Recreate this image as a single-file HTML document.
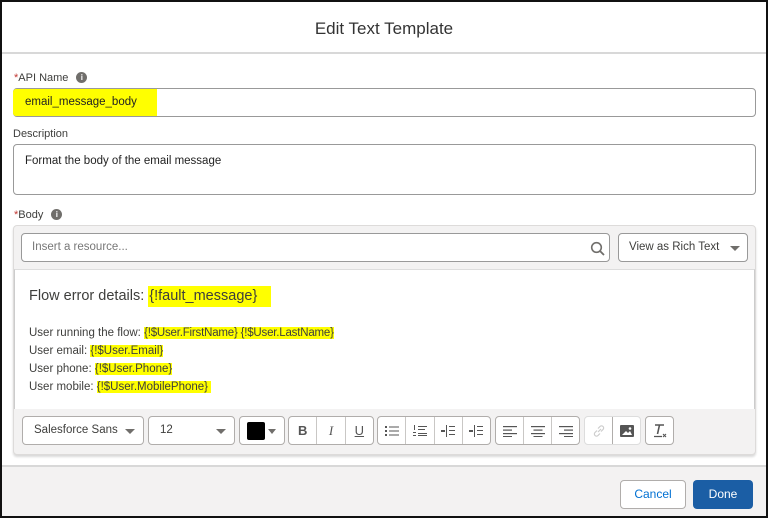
<!DOCTYPE html><html><head><style>
*{box-sizing:border-box;margin:0;padding:0}
body{width:768px;height:518px;background:#fff;font-family:"Liberation Sans",sans-serif;color:#3e3e3c;position:relative;overflow:hidden}
.frame{position:absolute;left:0;top:0;width:768px;height:518px;border:2px solid #111;}
.a{position:absolute}
.lbl{font-size:11px;color:#3e3e3c}
.req{color:#c23934}
.info{display:inline-block;width:11px;height:11px;border-radius:50%;background:#706e6b;color:#fff;font-size:8px;text-align:center;line-height:11px;font-weight:bold;vertical-align:1px;margin-left:8px}
.inp{border:1px solid #999;border-radius:4px;background:#fff}
.hl{background:#ffff00}
.btn{position:absolute;top:416px;height:29px;border:1px solid #b0adab;border-radius:4px;background:#fff;display:flex;overflow:hidden}
.sb{flex:1;height:27px;border-right:1px solid #c9c7c5;display:flex;align-items:center;justify-content:center;font-size:13px;color:#555}
.sb:last-child{border-right:none}
.ed{font-size:11.5px;line-height:18px;color:#3e3e3c}
</style></head><body>
<div class="a" style="left:0;top:0;width:768px;height:54px;background:#fff;border-bottom:2px solid #d8d8d8"></div>
<div class="a" style="left:0;top:19px;width:768px;text-align:center;font-size:17px;color:#333">Edit Text Template</div>

<div class="a lbl" style="left:14px;top:72px"><span class="req">*</span>API Name<span class="info">i</span></div>
<div class="a inp" style="left:13px;top:88px;width:743px;height:29px"></div>
<div class="a hl" style="left:13px;top:89px;width:144px;height:27px;border-radius:3px 0 0 3px"></div>
<div class="a" style="left:25px;top:96px;font-size:11.5px;color:#222">email_message_body</div>

<div class="a lbl" style="left:13px;top:128px">Description</div>
<div class="a inp" style="left:13px;top:144px;width:743px;height:51px"></div>
<div class="a" style="left:25px;top:155px;font-size:11.5px;color:#222">Format the body of the email message</div>

<div class="a lbl" style="left:14px;top:209px"><span class="req">*</span>Body<span class="info">i</span></div>
<div class="a" style="left:13px;top:225px;width:743px;height:230px;background:#f3f2f2;border:1px solid #dddbda;border-radius:4px;box-shadow:0 2px 2px rgba(0,0,0,.15)"></div>
<div class="a inp" style="left:21px;top:233px;width:589px;height:29px"></div>
<div class="a" style="left:32px;top:241px;font-size:11.5px;color:#777">Insert a resource...</div>
<svg class="a" style="left:590px;top:241px" width="16" height="16" viewBox="0 0 16 16"><circle cx="6.5" cy="6.5" r="4.8" fill="none" stroke="#706e6b" stroke-width="1.6"/><path d="M10 10l4 4" stroke="#706e6b" stroke-width="1.8"/></svg>
<div class="a inp" style="left:618px;top:233px;width:130px;height:29px"></div>
<div class="a" style="left:629px;top:241px;font-size:11.5px;color:#3e3e3c">View as Rich Text</div>
<div class="a" style="left:730px;top:246px;width:0;height:0;border-left:5px solid transparent;border-right:5px solid transparent;border-top:5px solid #706e6b"></div>

<div class="a" style="left:14px;top:269px;width:741px;height:140px;background:#fff;border-left:1px solid #ccc;border-right:1px solid #ccc;border-top:1px solid #ddd"></div>
<div class="a" style="left:29px;top:288px;font-size:14.5px;color:#3e3e3c">Flow error details: <span class="hl" style="padding:2px 14px 3px 1px">{!fault_message}</span></div>
<div class="a ed" style="left:29px;top:324px">User running the flow: <span class="hl" style="letter-spacing:-0.2px">{!$User.FirstName} {!$User.LastName}</span><br>User email: <span class="hl">{!$User.Email}</span><br>User phone: <span class="hl">{!$User.Phone}</span><br>User mobile: <span class="hl">{!$User.MobilePhone}&nbsp;</span></div>

<div class="btn" style="left:22px;width:122px"><span style="position:absolute;left:11px;top:7px;font-size:11.5px">Salesforce Sans</span><span style="position:absolute;right:8px;top:12px;border-left:5px solid transparent;border-right:5px solid transparent;border-top:5px solid #706e6b"></span></div>
<div class="btn" style="left:148px;width:87px"><span style="position:absolute;left:11px;top:7px;font-size:11.5px">12</span><span style="position:absolute;right:8px;top:12px;border-left:5px solid transparent;border-right:5px solid transparent;border-top:5px solid #706e6b"></span></div>
<div class="btn" style="left:239px;width:46px"><span style="position:absolute;left:7px;top:5px;width:18px;height:18px;background:#000;border-radius:2px"></span><span style="position:absolute;right:8px;top:12px;border-left:4px solid transparent;border-right:4px solid transparent;border-top:5px solid #706e6b"></span></div>
<div class="btn" style="left:288px;width:86px"><span class="sb" style="font-weight:bold">B</span><span class="sb" style="font-style:italic;font-family:'Liberation Serif',serif">I</span><span class="sb" style="text-decoration:underline">U</span></div>
<div class="btn" style="left:377px;width:114px">
<span class="sb"><svg width="14" height="12"><g fill="#555"><rect x="0" y="1" width="2" height="2"/><rect x="0" y="5" width="2" height="2"/><rect x="0" y="9" width="2" height="2"/><rect x="4" y="1.5" width="10" height="1"/><rect x="4" y="5.5" width="10" height="1"/><rect x="4" y="9.5" width="10" height="1"/></g></svg></span>
<span class="sb"><svg width="14" height="12"><g fill="#555"><rect x="1" y="0" width="1" height="5"/><rect x="0" y="7" width="3" height="1"/><rect x="0" y="10" width="3" height="1"/><rect x="5" y="1" width="9" height="1"/><rect x="5" y="4" width="7" height="1"/><rect x="5" y="8" width="9" height="1"/><rect x="5" y="10" width="9" height="1"/></g></svg></span>
<span class="sb"><svg width="14" height="12"><g fill="#555"><rect x="0" y="5" width="4" height="2"/><rect x="5" y="0" width="1" height="12"/><rect x="8" y="1" width="6" height="1"/><rect x="8" y="5" width="6" height="1"/><rect x="8" y="9" width="6" height="1"/></g></svg></span>
<span class="sb"><svg width="14" height="12"><g fill="#555"><rect x="0" y="5" width="4" height="2"/><rect x="5" y="0" width="1" height="12"/><rect x="8" y="1" width="6" height="1"/><rect x="8" y="5" width="6" height="1"/><rect x="8" y="9" width="6" height="1"/></g></svg></span></div>
<div class="btn" style="left:495px;width:85px">
<span class="sb"><svg width="14" height="12"><g fill="#555"><rect x="0" y="1" width="14" height="1.2"/><rect x="0" y="4.5" width="9" height="1.2"/><rect x="0" y="8" width="14" height="1.2"/><rect x="0" y="11" width="9" height="1"/></g></svg></span>
<span class="sb"><svg width="14" height="12"><g fill="#555"><rect x="0" y="1" width="14" height="1.2"/><rect x="2.5" y="4.5" width="9" height="1.2"/><rect x="0" y="8" width="14" height="1.2"/><rect x="2.5" y="11" width="9" height="1"/></g></svg></span>
<span class="sb"><svg width="14" height="12"><g fill="#555"><rect x="0" y="1" width="14" height="1.2"/><rect x="5" y="4.5" width="9" height="1.2"/><rect x="0" y="8" width="14" height="1.2"/><rect x="5" y="11" width="9" height="1"/></g></svg></span></div>
<div class="btn" style="left:584px;width:57px;border-color:#ddd">
<span class="sb" style="border-right:1px solid #b0adab"><svg width="14" height="14"><path d="M6 8l3-3M5 6.5l-2 2a2 2 0 003 3l2-2M9 7.5l2-2a2 2 0 00-3-3l-2 2" fill="none" stroke="#ccc" stroke-width="1.2"/></svg></span>
<span class="sb"><svg width="14" height="12"><rect x="0" y="0" width="14" height="12" rx="1" fill="#555"/><path d="M2 10l4-4 2 2 2-2 2 4z" fill="#fff"/><circle cx="10" cy="3.5" r="1.3" fill="#fff"/></svg></span></div>
<div class="btn" style="left:645px;width:29px"><span class="sb"><svg width="16" height="16"><path d="M3 2h9M7.5 2l-2 9" stroke="#555" stroke-width="1.6" fill="none"/><path d="M2 13.5h8" stroke="#555" stroke-width="1.3"/><path d="M11 11l3 3M14 11l-3 3" stroke="#555" stroke-width="1.1"/></svg></span></div>

<div class="a" style="left:0;top:465px;width:768px;height:53px;background:#f3f2f2;border-top:2px solid #d8d8d8"></div>
<div class="a" style="left:620px;top:480px;width:66px;height:29px;background:#fff;border:1px solid #b0adab;border-radius:4px;text-align:center;line-height:27px;font-size:12px;color:#0070d2">Cancel</div>
<div class="a" style="left:693px;top:480px;width:60px;height:29px;background:#1b5ea5;border-radius:4px;text-align:center;line-height:29px;font-size:12px;color:#fff">Done</div>
<div class="frame"></div>
</body></html>
